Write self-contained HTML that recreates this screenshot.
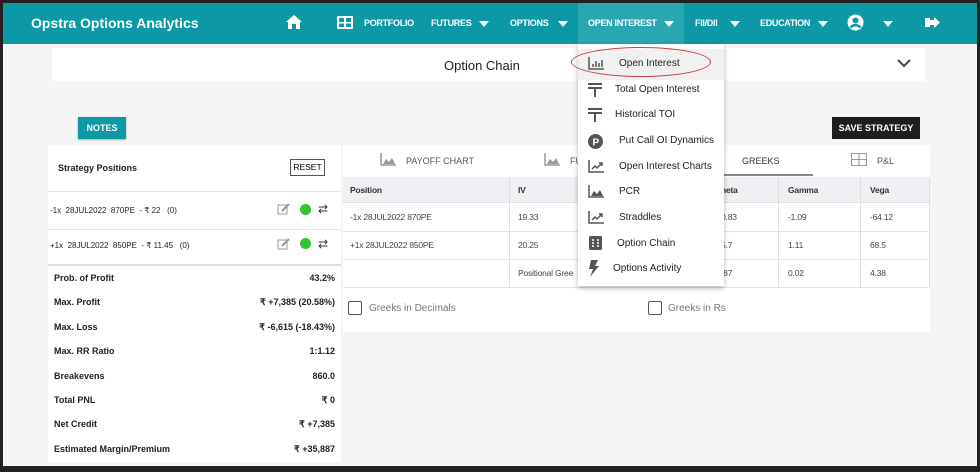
<!DOCTYPE html>
<html><head><meta charset="utf-8"><style>
*{margin:0;padding:0;box-sizing:border-box}
body{width:980px;height:472px;background:#222;font-family:"Liberation Sans",sans-serif;position:relative;overflow:hidden}
.a{position:absolute}
#frame{left:3px;top:3px;width:974px;height:463px;background:#f5f5f5}
#nav{left:3px;top:3px;width:974px;height:41px;background:#0c98a5}
.nt{color:#fff;font-size:9px;font-weight:bold;top:18px;letter-spacing:-0.3px}
.car{width:0;height:0;border-left:5px solid transparent;border-right:5px solid transparent;border-top:6px solid #fff;top:21px}
.tx{font-size:10px;color:#222}
.b{font-weight:bold}
.hl{height:1px;background:#e3e3e3}
.mi{font-size:10px;color:#222}
.td{font-size:8.5px;color:#444;letter-spacing:-0.2px}
</style></head><body>
<div id="frame" class="a"></div>
<div id="nav" class="a"></div>
<div class="a" style="left:578px;top:3px;width:106px;height:41px;background:#2aa6b1"></div>
<div class="a" style="left:31px;top:15px;color:#fff;font-size:14px;font-weight:bold">Opstra Options Analytics</div>
<svg class="a" style="left:285px;top:14px" width="18" height="16" viewBox="0 0 18 16"><path d="M9 1L1 8h2v7h4v-5h4v5h4V8h2z" fill="#fff"/></svg>
<svg class="a" style="left:337px;top:16px" width="16" height="13"><rect width="16" height="13" rx="1" fill="#fff"/><rect x="2" y="2" width="5" height="4" fill="#0c98a5"/><rect x="9" y="2" width="5" height="4" fill="#0c98a5"/><rect x="2" y="7.5" width="5" height="3.5" fill="#0c98a5"/><rect x="9" y="7.5" width="5" height="3.5" fill="#0c98a5"/></svg>
<div class="a nt" style="left:364px">PORTFOLIO</div>
<div class="a nt" style="left:431px">FUTURES</div><div class="a car" style="left:479px"></div>
<div class="a nt" style="left:510px">OPTIONS</div><div class="a car" style="left:558px"></div>
<div class="a nt" style="left:588px">OPEN INTEREST</div><div class="a car" style="left:664px"></div>
<div class="a nt" style="left:695px">FII/DII</div><div class="a car" style="left:730px"></div>
<div class="a nt" style="left:760px">EDUCATION</div><div class="a car" style="left:818px"></div>
<svg class="a" style="left:847px;top:14px" width="17" height="17"><circle cx="8.5" cy="8.5" r="8" fill="#fff"/><circle cx="8.5" cy="6.5" r="3" fill="#0c98a5"/><path d="M3.5 13.5c2-3 8-3 10 0" stroke="#0c98a5" stroke-width="2.5" fill="none"/></svg>
<div class="a car" style="left:883px"></div>
<svg class="a" style="left:924px;top:16px" width="16" height="13"><path d="M1 2h5v9H1z" fill="#fff"/><path d="M6 4h4V1l6 5.5-6 5.5V9H6z" fill="#fff"/></svg>

<div class="a" style="left:52px;top:48px;width:873px;height:33px;background:#fff"></div>
<div class="a" style="left:444px;top:58px;font-size:13px;color:#222">Option Chain</div>
<svg class="a" style="left:897px;top:59px" width="14" height="9"><path d="M1 1l6 6 6-6" stroke="#444" stroke-width="2" fill="none"/></svg>

<div class="a" style="left:78px;top:117px;width:48px;height:22px;background:#0c98a5;box-shadow:0 1px 2px rgba(0,0,0,.3);color:#fff;font-size:9px;font-weight:bold;text-align:center;line-height:22px">NOTES</div>
<div class="a" style="left:832px;top:117px;width:88px;height:22px;background:#1e1e1e;color:#fff;font-size:9px;font-weight:bold;text-align:center;line-height:22px">SAVE STRATEGY</div>

<div class="a" style="left:48px;top:145px;width:293px;height:317px;background:#fff"></div>
<div class="a tx b" style="left:58px;top:163px;font-size:9px">Strategy Positions</div>
<div class="a" style="left:290px;top:159px;width:35px;height:17px;border:1px solid #555;font-size:8.5px;text-align:center;line-height:15px">RESET</div>
<div class="a hl" style="left:48px;top:191px;width:293px"></div>
<div class="a tx" style="left:50px;top:206px;font-size:8px">-1x &nbsp;28JUL2022 &nbsp;870PE &nbsp;- ₹ 22 &nbsp;&nbsp;(0)</div>
<div class="a hl" style="left:48px;top:229px;width:293px"></div>
<div class="a tx" style="left:50px;top:241px;font-size:8px">+1x &nbsp;28JUL2022 &nbsp;850PE &nbsp;- ₹ 11.45 &nbsp;&nbsp;(0)</div>
<div class="a" style="left:48px;top:264px;width:293px;height:2px;background:#ddd"></div>
<svg class="a" style="left:277px;top:203px" width="13" height="12"><rect x="1" y="2" width="9" height="9" fill="none" stroke="#999"/><path d="M5 8l7-7" stroke="#999" stroke-width="2"/></svg>
<svg class="a" style="left:277px;top:238px" width="13" height="12"><rect x="1" y="2" width="9" height="9" fill="none" stroke="#999"/><path d="M5 8l7-7" stroke="#999" stroke-width="2"/></svg>
<div class="a" style="left:300px;top:204px;width:11px;height:11px;border-radius:50%;background:#2ec52e"></div>
<div class="a" style="left:300px;top:238px;width:11px;height:11px;border-radius:50%;background:#2ec52e"></div>
<div class="a" style="left:318px;top:202px;font-size:12px;color:#333">⇄</div>
<div class="a" style="left:318px;top:237px;font-size:12px;color:#333">⇄</div>

<div class="a" style="left:54px;top:273px;width:281px;font-size:9px;color:#222;font-weight:bold">
<div style="display:flex;justify-content:space-between;height:24.4px"><span>Prob. of Profit</span><span>43.2%</span></div>
<div style="display:flex;justify-content:space-between;height:24.4px"><span>Max. Profit</span><span>₹ +7,385 (20.58%)</span></div>
<div style="display:flex;justify-content:space-between;height:24.4px"><span>Max. Loss</span><span>₹ -6,615 (-18.43%)</span></div>
<div style="display:flex;justify-content:space-between;height:24.4px"><span>Max. RR Ratio</span><span>1:1.12</span></div>
<div style="display:flex;justify-content:space-between;height:24.4px"><span>Breakevens</span><span>860.0</span></div>
<div style="display:flex;justify-content:space-between;height:24.4px"><span>Total PNL</span><span>₹ 0</span></div>
<div style="display:flex;justify-content:space-between;height:24.4px"><span>Net Credit</span><span>₹ +7,385</span></div>
<div style="display:flex;justify-content:space-between;height:24.4px"><span>Estimated Margin/Premium</span><span>₹ +35,887</span></div>
</div>

<div class="a" style="left:343px;top:145px;width:587px;height:187px;background:#fff"></div>
<svg class="a" style="left:380px;top:153px" width="16" height="13"><path d="M1 0v12h15" stroke="#999" stroke-width="1.5" fill="none"/><path d="M3 11l3-5 3 3 3-4 3 6z" fill="#999"/></svg>
<div class="a" style="left:406px;top:156px;font-size:9px;color:#555">PAYOFF CHART</div>
<svg class="a" style="left:544px;top:153px" width="16" height="13"><path d="M1 0v12h15" stroke="#999" stroke-width="1.5" fill="none"/><path d="M3 11l3-5 3 3 3-4 3 6z" fill="#999"/></svg>
<div class="a" style="left:570px;top:156px;font-size:9px;color:#555">FU</div>
<div class="a" style="left:742px;top:156px;font-size:9px;color:#333">GREEKS</div>
<div class="a" style="left:717px;top:174px;width:96px;height:2px;background:#888"></div>
<svg class="a" style="left:851px;top:153px" width="16" height="13"><rect x="0.5" y="0.5" width="15" height="12" fill="none" stroke="#999"/><path d="M8 0v13M0 6.5h16" stroke="#999"/></svg>
<div class="a" style="left:877px;top:156px;font-size:9px;color:#555">P&amp;L</div>

<div class="a" style="left:343px;top:177px;width:587px;height:26px;background:#eef0f3;border-bottom:1px solid #e0e0e0"></div>
<div class="a hl" style="left:343px;top:231px;width:587px"></div>
<div class="a hl" style="left:343px;top:259px;width:587px"></div>
<div class="a hl" style="left:343px;top:287px;width:587px"></div>
<div class="a" style="left:509px;top:177px;width:1px;height:110px;background:#e0e0e0"></div>
<div class="a" style="left:778px;top:177px;width:1px;height:110px;background:#e0e0e0"></div>
<div class="a" style="left:860px;top:177px;width:1px;height:110px;background:#e0e0e0"></div>
<div class="a" style="left:929px;top:177px;width:1px;height:110px;background:#e0e0e0"></div>
<div class="a td b" style="left:350px;top:185px;color:#333">Position</div>
<div class="a td b" style="left:518px;top:185px;color:#333">IV</div>
<div class="a td b" style="left:721px;top:185px;color:#333">heta</div>
<div class="a td b" style="left:788px;top:185px;color:#333">Gamma</div>
<div class="a td b" style="left:870px;top:185px;color:#333">Vega</div>
<div class="a td" style="left:350px;top:212px">-1x 28JUL2022 870PE</div>
<div class="a td" style="left:518px;top:212px">19.33</div>
<div class="a td" style="left:721px;top:212px">0.83</div>
<div class="a td" style="left:788px;top:212px">-1.09</div>
<div class="a td" style="left:870px;top:212px">-64.12</div>
<div class="a td" style="left:350px;top:240px">+1x 28JUL2022 850PE</div>
<div class="a td" style="left:518px;top:240px">20.25</div>
<div class="a td" style="left:721px;top:240px">5.7</div>
<div class="a td" style="left:788px;top:240px">1.11</div>
<div class="a td" style="left:870px;top:240px">68.5</div>
<div class="a td" style="left:518px;top:268px">Positional Gree</div>
<div class="a td" style="left:721px;top:268px">.87</div>
<div class="a td" style="left:788px;top:268px">0.02</div>
<div class="a td" style="left:870px;top:268px">4.38</div>
<div class="a" style="left:348px;top:301px;width:14px;height:14px;border:1.5px solid #555;border-radius:2px"></div>
<div class="a" style="left:369px;top:303px;font-size:10px;color:#777">Greeks in Decimals</div>
<div class="a" style="left:648px;top:301px;width:14px;height:14px;border:1.5px solid #555;border-radius:2px"></div>
<div class="a" style="left:668px;top:303px;font-size:10px;color:#777">Greeks in Rs</div>

<div class="a" style="left:578px;top:44px;width:146px;height:242px;background:#fff;box-shadow:0 2px 5px rgba(0,0,0,.3)"></div>
<div class="a" style="left:578px;top:49px;width:146px;height:31px;background:#f1f1f1"></div>
<div class="a" style="left:571px;top:47px;width:140px;height:30px;border:1.5px solid #c84040;border-radius:50%"></div>
<svg class="a" style="left:588px;top:57px" width="16" height="13"><path d="M1 0v12h15" stroke="#555" stroke-width="1.5" fill="none"/><path d="M5 10V7M8 10V4M11 10V6M14 10V3" stroke="#555" stroke-width="1.5"/></svg>
<div class="a mi" style="left:619px;top:58px">Open Interest</div>
<svg class="a" style="left:588px;top:83px" width="14" height="14"><path d="M0 1h14M0 5h14M7 5v9" stroke="#555" stroke-width="2"/></svg>
<div class="a mi" style="left:615px;top:84px">Total Open Interest</div>
<svg class="a" style="left:588px;top:108px" width="14" height="14"><path d="M0 1h14M0 5h14M7 5v9" stroke="#555" stroke-width="2"/></svg>
<div class="a mi" style="left:615px;top:109px">Historical TOI</div>
<svg class="a" style="left:588px;top:134px" width="15" height="15"><circle cx="7.5" cy="7.5" r="7.5" fill="#555"/><text x="4.5" y="11.5" font-size="10" font-weight="bold" fill="#fff" font-family="Liberation Sans">P</text></svg>
<div class="a mi" style="left:619px;top:135px">Put Call OI Dynamics</div>
<svg class="a" style="left:588px;top:160px" width="16" height="13"><path d="M1 0v12h15" stroke="#555" stroke-width="1.5" fill="none"/><path d="M4 9l3-3 2 2 4-4M11 3h3v3" stroke="#555" stroke-width="1.5" fill="none"/></svg>
<div class="a mi" style="left:619px;top:161px">Open Interest Charts</div>
<svg class="a" style="left:588px;top:185px" width="16" height="13"><path d="M1 0v12h15" stroke="#555" stroke-width="1.5" fill="none"/><path d="M3 11l3-5 3 3 3-4 3 6z" fill="#555"/></svg>
<div class="a mi" style="left:619px;top:186px">PCR</div>
<svg class="a" style="left:588px;top:211px" width="16" height="13"><path d="M1 0v12h15" stroke="#555" stroke-width="1.5" fill="none"/><path d="M4 9l3-3 2 2 4-4M11 3h3v3" stroke="#555" stroke-width="1.5" fill="none"/></svg>
<div class="a mi" style="left:619px;top:212px">Straddles</div>
<svg class="a" style="left:589px;top:236px" width="13" height="14"><rect width="13" height="14" rx="1.5" fill="#555"/><path d="M4 3v2M4 6v2M4 9v2M9 3v2M9 6v2M9 9v2" stroke="#fff" stroke-width="1.5"/></svg>
<div class="a mi" style="left:617px;top:238px">Option Chain</div>
<svg class="a" style="left:588px;top:260px" width="11" height="17"><path d="M3 0h7L7 6h4L2 17l3-8H1z" fill="#555"/></svg>
<div class="a mi" style="left:613px;top:263px">Options Activity</div>
</body></html>
